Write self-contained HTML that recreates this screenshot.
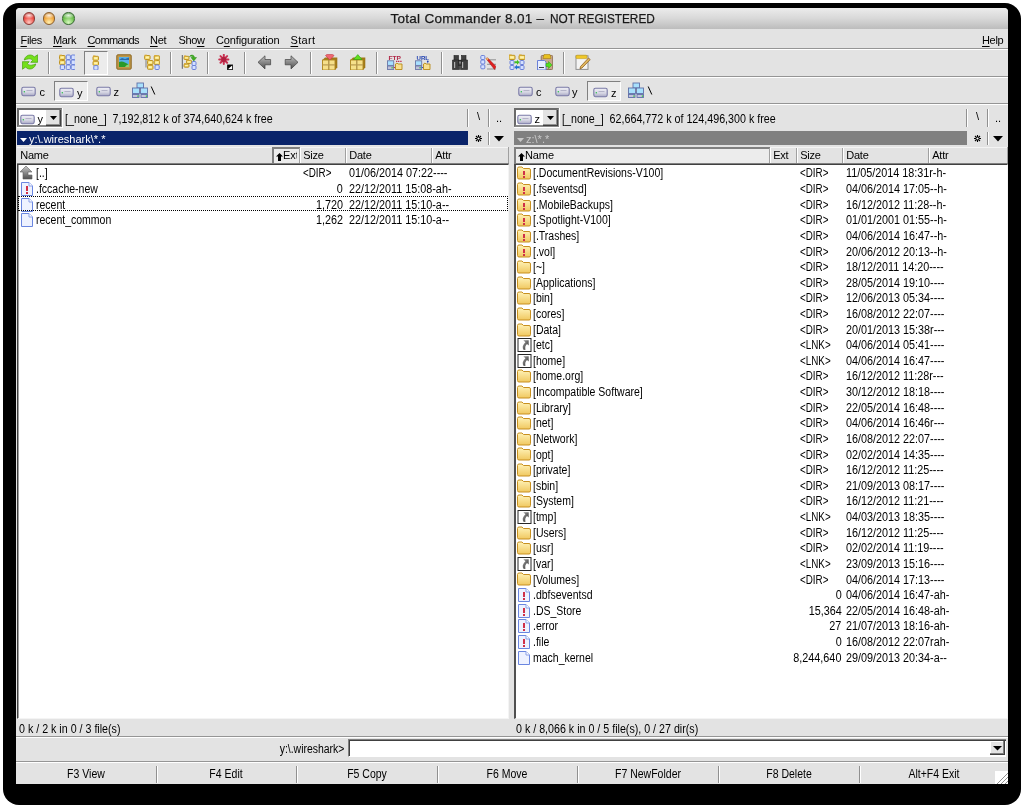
<!DOCTYPE html><html><head><meta charset="utf-8"><style>
*{box-sizing:border-box;margin:0;padding:0}
html,body{width:1024px;height:808px;overflow:hidden;background:#fff;font-family:"Liberation Sans",sans-serif;font-size:11px;color:#000}
.a{position:absolute}
.t{position:absolute;white-space:nowrap;line-height:1.2}
.tl{position:absolute;width:13px;height:13px;border-radius:50%}
u{text-decoration:underline;text-underline-offset:1.5px;text-decoration-thickness:1px}
</style></head><body><div style="position:absolute;left:0;top:0;width:1024px;height:808px;will-change:transform">
<svg width="0" height="0" style="position:absolute"><defs>
<linearGradient id="gFold" x1="0" y1="0" x2="0" y2="1"><stop offset="0" stop-color="#fff3b8"/><stop offset="1" stop-color="#f0c860"/></linearGradient>
<linearGradient id="gGrayArr" x1="0" y1="0" x2="0" y2="1"><stop offset="0" stop-color="#c8c8c8"/><stop offset="1" stop-color="#505050"/></linearGradient>
<symbol id="folder" viewBox="0 0 16 16"><path d="M1.5 3.5 Q1.5 2 3 2 H6 L7.5 3.5 H13 Q14.5 3.5 14.5 5 V12.5 Q14.5 14 13 14 H3 Q1.5 14 1.5 12.5 Z" fill="url(#gFold)" stroke="#c89020" stroke-width="1"/></symbol>
<symbol id="folderh" viewBox="0 0 16 16"><use href="#folder"/><rect x="7" y="6" width="2" height="4" fill="#d03048"/><rect x="7" y="11" width="2" height="2" fill="#d03048"/></symbol>
<symbol id="file" viewBox="0 0 16 16"><path d="M2.5 1.5 H10 L13.5 5 V14.5 H2.5 Z" fill="#eef2ff" stroke="#6a86e0" stroke-width="1"/><path d="M10 1.5 V5 H13.5" fill="#fff" stroke="#8aa0e8" stroke-width="1"/></symbol>
<symbol id="fileh" viewBox="0 0 16 16"><use href="#file"/><rect x="7" y="5" width="2" height="5" fill="#d03048"/><rect x="7" y="11" width="2" height="2" fill="#d03048"/></symbol>
<symbol id="link" viewBox="0 0 16 16"><linearGradient id="gLnk" x1="0" y1="0" x2="1" y2="1"><stop offset="0" stop-color="#a0a0a0"/><stop offset="1" stop-color="#303030"/></linearGradient><rect x="2" y="1.5" width="13" height="13" fill="#fff" stroke="#282828" stroke-width="1"/><path d="M7.3 3.2 H12.7 V8.6 L11 6.9 Q8.5 9 9.5 12.8 L7.7 13 Q5 9.5 9.4 5.3 Z" fill="url(#gLnk)"/></symbol>
<symbol id="updir" viewBox="0 0 16 16"><path d="M7 1 L1 7 H4 V14 H13 V10 H9 V7 H13 Z" fill="url(#gGrayArr)" stroke="#606060" stroke-width="0.6"/></symbol>
<symbol id="drive" viewBox="0 0 16 16"><linearGradient id="gDrv" x1="0" y1="0" x2="0" y2="1"><stop offset="0" stop-color="#f0f0f6"/><stop offset="0.6" stop-color="#d4d4e2"/><stop offset="1" stop-color="#a8a8c4"/></linearGradient><rect x="0.8" y="4.3" width="13.4" height="8.4" rx="1.6" fill="url(#gDrv)" stroke="#7a7aa6" stroke-width="1.1"/><rect x="5.5" y="7.2" width="6" height="0.8" fill="#a8a8c0"/><circle cx="3.3" cy="8.8" r="0.7" fill="#20c040"/></symbol>
<symbol id="net" viewBox="0 0 16 16"><g stroke="#6070a8" stroke-width="0.9"><rect x="5" y="1" width="6.5" height="5" fill="#a8e0fc"/><rect x="0.5" y="6" width="7" height="5.5" fill="#a8e0fc"/><rect x="8.5" y="6" width="7" height="5.5" fill="#a8e0fc"/><rect x="0.5" y="12.5" width="6.5" height="3" fill="#c4c4dc"/><rect x="9" y="12.5" width="6.5" height="3" fill="#c4c4dc"/></g><rect x="7" y="7.5" width="2" height="2" fill="#8080a0"/><rect x="5.3" y="13.5" width="1.2" height="1.2" fill="#20d020"/><rect x="13.8" y="13.5" width="1.2" height="1.2" fill="#20d020"/></symbol>
<symbol id="tb_refresh" viewBox="0 0 16 16"><path d="M2.2 6 C3 2.5 6 0.8 8.5 1 C10.5 1.2 11.5 2 12.3 3 L15.6 0.8 V8.3 H8.8 L10.6 6.3 C9.5 5 8 4.6 6.5 4.8 C5 5 3.5 5.6 2.2 6 Z" fill="#74e01a" stroke="#50a818" stroke-width="0.8"/><path d="M13.8 10 C13 13.5 10 15.2 7.5 15 C5.5 14.8 4.5 14 3.7 13 L0.4 15.2 V7.7 H7.2 L5.4 9.7 C6.5 11 8 11.4 9.5 11.2 C11 11 12.5 10.4 13.8 10 Z" fill="#74e01a" stroke="#50a818" stroke-width="0.8"/></symbol><symbol id="tb_brief" viewBox="0 0 16 16"><rect x="0.5" y="1.5" width="5.5" height="4.0" rx="0.8" fill="#f4dc70" stroke="#b88a18" stroke-width="0.9"/><rect x="0.5" y="0.7" width="2.475" height="1.5" fill="#d8a830"/><rect x="1.7" y="2.5" width="3.1" height="1.7999999999999998" fill="#fff4b0"/><rect x="0.5" y="6.5" width="5.5" height="4.0" rx="0.8" fill="#f4dc70" stroke="#b88a18" stroke-width="0.9"/><rect x="0.5" y="5.7" width="2.475" height="1.5" fill="#d8a830"/><rect x="1.7" y="7.5" width="3.1" height="1.7999999999999998" fill="#fff4b0"/><rect x="1.3" y="11" width="4.2" height="4.5" rx="1" fill="#d4e0ff" stroke="#6a80d8" stroke-width="1"/><rect x="7.2" y="1" width="4.2" height="4.5" rx="1" fill="#d4e0ff" stroke="#6a80d8" stroke-width="1"/><rect x="7.2" y="6" width="4.2" height="4.5" rx="1" fill="#d4e0ff" stroke="#6a80d8" stroke-width="1"/><rect x="7.2" y="11" width="4.2" height="4.5" rx="1" fill="#d4e0ff" stroke="#6a80d8" stroke-width="1"/><rect x="12.2" y="1" width="4.2" height="4.5" rx="1" fill="#d4e0ff" stroke="#6a80d8" stroke-width="1"/><rect x="12.2" y="6" width="4.2" height="4.5" rx="1" fill="#d4e0ff" stroke="#6a80d8" stroke-width="1"/><rect x="12.2" y="11" width="4.2" height="4.5" rx="1" fill="#d4e0ff" stroke="#6a80d8" stroke-width="1"/></symbol><symbol id="tb_detail" viewBox="0 0 16 16"><rect x="5" y="2.3" width="5.5" height="4.0" rx="0.8" fill="#f4dc70" stroke="#b88a18" stroke-width="0.9"/><rect x="5" y="1.5" width="2.475" height="1.5" fill="#d8a830"/><rect x="6.2" y="3.3" width="3.1" height="1.7999999999999998" fill="#fff4b0"/><rect x="5" y="7.3" width="5.5" height="4.0" rx="0.8" fill="#f4dc70" stroke="#b88a18" stroke-width="0.9"/><rect x="5" y="6.5" width="2.475" height="1.5" fill="#d8a830"/><rect x="6.2" y="8.3" width="3.1" height="1.7999999999999998" fill="#fff4b0"/><rect x="5.8" y="11.6" width="4.2" height="4.5" rx="1" fill="#d4e0ff" stroke="#6a80d8" stroke-width="1"/></symbol><symbol id="tb_thumb" viewBox="0 0 16 16"><rect x="0.8" y="0.8" width="14.4" height="14.4" rx="1" fill="#c09848" stroke="#8a6420" stroke-width="1"/><rect x="3" y="3" width="10" height="10" fill="#5ab0e8"/><path d="M3 6 L6 4 L9 5 L13 3.5 V6 Z" fill="#2a6aa8"/><path d="M3 8 C6 6.5 9 8 13 11 V13 H3 Z" fill="#2a9a2a"/><path d="M9 13 C10 11 12 10.5 13 10 V13 Z" fill="#90d070"/></symbol><symbol id="tb_tree" viewBox="0 0 16 16"><rect x="0.6" y="1.5" width="5.5" height="4.0" rx="0.8" fill="#f4dc70" stroke="#b88a18" stroke-width="0.9"/><rect x="0.6" y="0.7" width="2.475" height="1.5" fill="#d8a830"/><rect x="1.7999999999999998" y="2.5" width="3.1" height="1.7999999999999998" fill="#fff4b0"/><rect x="1.5" y="6" width="1" height="7.5" fill="#808080"/><rect x="3.5" y="6.5" width="5.5" height="4.0" rx="0.8" fill="#f4dc70" stroke="#b88a18" stroke-width="0.9"/><rect x="3.5" y="5.7" width="2.475" height="1.5" fill="#d8a830"/><rect x="4.7" y="7.5" width="3.1" height="1.7999999999999998" fill="#fff4b0"/><rect x="3.5" y="11.3" width="5.5" height="4.0" rx="0.8" fill="#f4dc70" stroke="#b88a18" stroke-width="0.9"/><rect x="3.5" y="10.5" width="2.475" height="1.5" fill="#d8a830"/><rect x="4.7" y="12.3" width="3.1" height="1.7999999999999998" fill="#fff4b0"/><rect x="10.2" y="1.8" width="5.5" height="4.0" rx="0.8" fill="#f4dc70" stroke="#b88a18" stroke-width="0.9"/><rect x="10.2" y="1" width="2.475" height="1.5" fill="#d8a830"/><rect x="11.399999999999999" y="2.8" width="3.1" height="1.7999999999999998" fill="#fff4b0"/><rect x="10.2" y="6.5" width="5.5" height="4.0" rx="0.8" fill="#f4dc70" stroke="#b88a18" stroke-width="0.9"/><rect x="10.2" y="5.7" width="2.475" height="1.5" fill="#d8a830"/><rect x="11.399999999999999" y="7.5" width="3.1" height="1.7999999999999998" fill="#fff4b0"/><rect x="11" y="11" width="4.2" height="4.5" rx="1" fill="#d4e0ff" stroke="#6a80d8" stroke-width="1"/></symbol><symbol id="tb_sync" viewBox="0 0 16 16"><rect x="0.8" y="1" width="1" height="13.8" fill="#606060"/><rect x="3" y="2.3" width="5" height="3.2" rx="0.8" fill="#f4dc70" stroke="#b88a18" stroke-width="0.9"/><rect x="3" y="1.5" width="2.25" height="1.5" fill="#d8a830"/><rect x="4.2" y="3.3" width="2.6" height="1" fill="#fff4b0"/><rect x="5.5" y="6.3" width="5" height="3.2" rx="0.8" fill="#f4dc70" stroke="#b88a18" stroke-width="0.9"/><rect x="5.5" y="5.5" width="2.25" height="1.5" fill="#d8a830"/><rect x="6.7" y="7.3" width="2.6" height="1" fill="#fff4b0"/><rect x="3" y="10.0" width="5" height="3.2" rx="0.8" fill="#f4dc70" stroke="#b88a18" stroke-width="0.9"/><rect x="3" y="9.2" width="2.25" height="1.5" fill="#d8a830"/><rect x="4.2" y="11.0" width="2.6" height="1" fill="#fff4b0"/><path d="M8.5 2.5 C10 0.5 13 0.5 13.5 3.5 L15.5 3.5 L12.8 7 L10 3.5 L12 3.5 C11.5 2 10 2 8.5 2.5Z" fill="#40b020" stroke="#2a8a18" stroke-width="0.5"/><rect x="11" y="7.5" width="4" height="4" rx="1" fill="#d4e0ff" stroke="#6a80d8" stroke-width="1"/><rect x="11" y="11.5" width="4" height="4" rx="1" fill="#d4e0ff" stroke="#6a80d8" stroke-width="1"/></symbol><symbol id="tb_ast" viewBox="0 0 16 16"><g stroke="#c83050" stroke-width="2" stroke-linecap="round"><path d="M6.8 0.8V10M2.2 5.4H11.4M3.5 2.1L10.1 8.7M10.1 2.1L3.5 8.7"/></g><circle cx="6.8" cy="5.4" r="2.5" fill="#b02040"/><rect x="10.6" y="11" width="5" height="4.6" fill="#fff" stroke="#202020" stroke-width="1"/><path d="M10.6 11H15.6L10.6 15.6Z" fill="#000"/></symbol><symbol id="tb_back" viewBox="0 0 16 16"><linearGradient id="gArr" x1="0" y1="0" x2="0" y2="1"><stop offset="0" stop-color="#c0c0c0"/><stop offset="1" stop-color="#505050"/></linearGradient><path d="M2 8.3 L9 1.8 V5.5 H14.6 V10.8 H9 V14.9 Z" fill="url(#gArr)" stroke="#404040" stroke-width="0.7"/></symbol><symbol id="tb_fwd" viewBox="0 0 16 16"><path d="M15 8.3 L8 1.8 V5.5 H2.2 V10.8 H8 V14.9 Z" fill="url(#gArr)" stroke="#404040" stroke-width="0.7"/></symbol><symbol id="tb_pack" viewBox="0 0 16 16"><path d="M0.5 6 L3 3.6 H15.3 V13.5 L13 16 H0.5 Z" fill="#a07818"/><rect x="0.5" y="6" width="12.5" height="10" fill="#f6e08a" stroke="#b08820" stroke-width="0.9"/><rect x="6.2" y="6" width="1.2" height="10" fill="#a88a40"/><rect x="0.5" y="10.3" width="12.5" height="1.2" fill="#b89a50"/><path d="M3.5 1.5 L5 0.4 H10.5 L12 1.5 L7.8 6 Z" fill="#f06870" stroke="#c03040" stroke-width="0.6"/></symbol><symbol id="tb_unpack" viewBox="0 0 16 16"><path d="M0.5 6 L3 3.6 H15.3 V13.5 L13 16 H0.5 Z" fill="#a07818"/><rect x="0.5" y="6" width="12.5" height="10" fill="#f6e08a" stroke="#b08820" stroke-width="0.9"/><rect x="6.2" y="6" width="1.2" height="10" fill="#a88a40"/><rect x="0.5" y="10.3" width="12.5" height="1.2" fill="#b89a50"/><path d="M3.5 5.5 L7.8 0.6 L12 5.5 Z" fill="#60e020" stroke="#30a010" stroke-width="0.6"/></symbol><symbol id="tb_ftp" viewBox="0 0 16 16"><text x="1.5" y="5.6" font-family="Liberation Sans" font-weight="bold" font-size="6.2" fill="#b02848" textLength="12.5" lengthAdjust="spacingAndGlyphs">FTP</text><rect x="0.5" y="6.8" width="6.2" height="4.6" fill="#a8e0ff" stroke="#6a78a8" stroke-width="0.9"/><rect x="0.5" y="12" width="6.2" height="3.5" fill="#c0c0d8" stroke="#6a78a8" stroke-width="0.9"/><rect x="4.5" y="13.2" width="1.2" height="1.2" fill="#20c020"/><rect x="6.7" y="13" width="2" height="1" fill="#c03050"/><path d="M8.5 10 L10 9 L11 10 H15 V15.5 H8.5 Z" fill="#f8e090" stroke="#b88a18" stroke-width="0.9"/><path d="M9 7.4H15" stroke="#c03050" stroke-width="1.2" stroke-dasharray="1.2 0.6"/></symbol><symbol id="tb_url" viewBox="0 0 16 16"><text x="1.5" y="5.6" font-family="Liberation Sans" font-weight="bold" font-size="6.2" fill="#2040b0" textLength="12.5" lengthAdjust="spacingAndGlyphs">URL</text><rect x="0.5" y="6.8" width="6.2" height="4.6" fill="#a8e0ff" stroke="#6a78a8" stroke-width="0.9"/><rect x="0.5" y="12" width="6.2" height="3.5" fill="#c0c0d8" stroke="#6a78a8" stroke-width="0.9"/><rect x="4.5" y="13.2" width="1.2" height="1.2" fill="#20c020"/><rect x="6.7" y="13" width="2" height="1" fill="#3050c0"/><path d="M8.5 10 L10 9 L11 10 H15 V15.5 H8.5 Z" fill="#f8e090" stroke="#b88a18" stroke-width="0.9"/><circle cx="12.8" cy="7.3" r="0.9" fill="#2040b0"/><rect x="12.5" y="7.5" width="0.6" height="1.8" fill="#2040b0"/></symbol><symbol id="tb_find" viewBox="0 0 16 16"><g fill="#404040" stroke="#202020" stroke-width="0.6"><rect x="2" y="1.5" width="4.5" height="5"/><rect x="9.5" y="1.5" width="4.5" height="5"/><path d="M0.5 6 H7.5 V15.5 H0.5 Z"/><path d="M8.5 6 H15.5 V15.5 H8.5 Z"/><rect x="6.5" y="6.5" width="3" height="5"/></g><rect x="2" y="8" width="1.2" height="6" fill="#b0b0b0"/><rect x="10" y="8" width="1.2" height="6" fill="#b0b0b0"/><rect x="7.5" y="7.5" width="1" height="2" fill="#c0c0c0"/></symbol><symbol id="tb_ren" viewBox="0 0 16 16"><rect x="0.8" y="1.5" width="4" height="4" rx="1" fill="#d4e0ff" stroke="#6a80d8" stroke-width="1"/><rect x="0.8" y="6" width="4" height="4" rx="1" fill="#d4e0ff" stroke="#6a80d8" stroke-width="1"/><rect x="0.8" y="10.8" width="4" height="4" rx="1" fill="#d4e0ff" stroke="#6a80d8" stroke-width="1"/><rect x="7" y="5.3" width="9" height="1" fill="#909090"/><rect x="7" y="9.8" width="9" height="1" fill="#909090"/><rect x="7" y="14.5" width="9" height="1" fill="#909090"/><path d="M6 4.5 L7.5 3.8 L16 12.5 L14.5 15.5 Z" fill="#e02020" stroke="#a01010" stroke-width="0.5"/><path d="M6 4.5 L7.5 3.8 L8.6 5 L7 6.2Z" fill="#f0c060"/></symbol><symbol id="tb_cmp" viewBox="0 0 16 16"><rect x="0" y="1.3" width="6" height="4.2" rx="0.8" fill="#f4dc70" stroke="#b88a18" stroke-width="0.9"/><rect x="0" y="0.5" width="2.7" height="1.5" fill="#d8a830"/><rect x="1.2" y="2.3" width="3.6" height="2" fill="#fff4b0"/><rect x="10" y="1.3" width="6" height="4.2" rx="0.8" fill="#f4dc70" stroke="#b88a18" stroke-width="0.9"/><rect x="10" y="0.5" width="2.7" height="1.5" fill="#d8a830"/><rect x="11.2" y="2.3" width="3.6" height="2" fill="#fff4b0"/><rect x="1" y="6.5" width="4" height="4" rx="1" fill="#d4e0ff" stroke="#6a80d8" stroke-width="1"/><rect x="1" y="11.5" width="4" height="4" rx="1" fill="#d4e0ff" stroke="#6a80d8" stroke-width="1"/><rect x="11" y="6.5" width="4" height="4" rx="1" fill="#d4e0ff" stroke="#6a80d8" stroke-width="1"/><rect x="11" y="11.5" width="4" height="4" rx="1" fill="#d4e0ff" stroke="#6a80d8" stroke-width="1"/><path d="M5.5 7.3H8V5.8L10.5 8.3L8 10.8V9.3H5.5Z" fill="#40c020"/><path d="M10.5 12.3H8V10.8L5.5 13.3L8 15.8V14.3H10.5Z" fill="#2070d0"/></symbol><symbol id="tb_copy" viewBox="0 0 16 16"><rect x="4.2" y="1.5" width="11.5" height="14" rx="1" fill="#c8a890" stroke="#8a6a50" stroke-width="0.9"/><path d="M6 4.5 L7 0.5 H13 L14 4.5 Z" fill="#e8c020" stroke="#a88010" stroke-width="0.6"/><path d="M0.5 6.5 H7.5 L9 8 V16 H0.5 Z" fill="#e8eeff" stroke="#6a80d8" stroke-width="1"/><rect x="2" y="13" width="5" height="1" fill="#404040" stroke-dasharray="1 1"/><path d="M9 9.5H11.5V7.5L15 11L11.5 14.5V12.5H9Z" fill="#50e020" stroke="#30a010" stroke-width="0.5"/></symbol><symbol id="tb_note" viewBox="0 0 16 16"><rect x="1" y="1.8" width="12" height="13.6" fill="#f4f4f4" stroke="#909090" stroke-width="1"/><rect x="1" y="1.2" width="11" height="3.4" rx="1" fill="#f0c828" stroke="#c09818" stroke-width="0.6"/><path d="M5.5 12.5 L13.5 4 L15.2 5.6 L7 14 L5 14.8 Z" fill="#e0b860" stroke="#906020" stroke-width="0.8"/></symbol></defs></svg>
<div class="a" style="left:3px;top:3px;width:1018px;height:802px;background:#000;border-radius:16px"></div><div class="a" style="left:16px;top:8px;width:992px;height:776px;background:#e3e3e3;border-radius:4px 4px 0 0"></div><div class="a" style="left:16px;top:8px;width:992px;height:21px;background:linear-gradient(#ececec,#d8d8d8 50%,#bcbcbc);border-radius:4px 4px 0 0"></div><div class="tl" style="left:22.8px;top:12.4px;width:12.4px;height:12.4px;border:1px solid #8a3a36;background:radial-gradient(ellipse 60% 30% at 50% 22%,rgba(255,255,255,.85),rgba(255,255,255,0) 100%),radial-gradient(circle at 50% 85%,#ffc8c0 0,#ec4a42 55%,#a83028 100%)"></div><div class="tl" style="left:42.8px;top:12.4px;width:12.4px;height:12.4px;border:1px solid #8a6030;background:radial-gradient(ellipse 60% 30% at 50% 22%,rgba(255,255,255,.85),rgba(255,255,255,0) 100%),radial-gradient(circle at 50% 85%,#fff0b0 0,#f0a43a 55%,#b07020 100%)"></div><div class="tl" style="left:62.3px;top:12.4px;width:12.4px;height:12.4px;border:1px solid #3a6a34;background:radial-gradient(ellipse 60% 30% at 50% 22%,rgba(255,255,255,.85),rgba(255,255,255,0) 100%),radial-gradient(circle at 50% 85%,#d8f8c0 0,#6cc04c 55%,#3a8a30 100%)"></div><div class="t" style="left:390.5px;top:10.6px;font-size:13.5px;color:#181818;letter-spacing:0.27px;-webkit-text-stroke:0.25px #181818">Total Commander 8.01 –</div><div class="t" style="left:549.5px;top:10.6px;font-size:13.5px;color:#181818;transform:scaleX(0.875);transform-origin:0 0;-webkit-text-stroke:0.25px #181818">NOT REGISTERED</div><div class="t" style="left:20.5px;top:34px;font-size:11px;letter-spacing:-0.35px"><u>F</u>iles</div><div class="t" style="left:53px;top:34px;font-size:11px;letter-spacing:-0.35px"><u>M</u>ark</div><div class="t" style="left:87.5px;top:34px;font-size:11px;letter-spacing:-0.6px"><u>C</u>ommands</div><div class="t" style="left:150px;top:34px;font-size:11px;letter-spacing:-0.3px"><u>N</u>et</div><div class="t" style="left:178.5px;top:34px;font-size:11px;letter-spacing:-0.4px">Sho<u>w</u></div><div class="t" style="left:216px;top:34px;font-size:11px;letter-spacing:-0.15px">C<u>o</u>nfiguration</div><div class="t" style="left:290.5px;top:34px;font-size:11px;letter-spacing:0.3px"><u>S</u>tart</div><div class="t" style="left:982px;top:34px;font-size:11px;letter-spacing:-0.35px"><u>H</u>elp</div><div class="a" style="left:16px;top:48px;width:992px;height:1px;background:#959595"></div><div class="a" style="left:16px;top:49px;width:992px;height:1px;background:#fff"></div><div class="a" style="left:16px;top:76px;width:992px;height:1px;background:#959595"></div><div class="a" style="left:16px;top:77px;width:992px;height:1px;background:#fff"></div><div class="a" style="left:48px;top:52px;width:1px;height:22px;background:#909090"></div><div class="a" style="left:49px;top:52px;width:1px;height:22px;background:#fff"></div><div class="a" style="left:170px;top:52px;width:1px;height:22px;background:#909090"></div><div class="a" style="left:171px;top:52px;width:1px;height:22px;background:#fff"></div><div class="a" style="left:207px;top:52px;width:1px;height:22px;background:#909090"></div><div class="a" style="left:208px;top:52px;width:1px;height:22px;background:#fff"></div><div class="a" style="left:244px;top:52px;width:1px;height:22px;background:#909090"></div><div class="a" style="left:245px;top:52px;width:1px;height:22px;background:#fff"></div><div class="a" style="left:310px;top:52px;width:1px;height:22px;background:#909090"></div><div class="a" style="left:311px;top:52px;width:1px;height:22px;background:#fff"></div><div class="a" style="left:376px;top:52px;width:1px;height:22px;background:#909090"></div><div class="a" style="left:377px;top:52px;width:1px;height:22px;background:#fff"></div><div class="a" style="left:441px;top:52px;width:1px;height:22px;background:#909090"></div><div class="a" style="left:442px;top:52px;width:1px;height:22px;background:#fff"></div><div class="a" style="left:563px;top:52px;width:1px;height:22px;background:#909090"></div><div class="a" style="left:564px;top:52px;width:1px;height:22px;background:#fff"></div><div class="a" style="left:84px;top:51px;width:24px;height:24px;border-top:1px solid #808080;border-left:1px solid #808080;border-right:1px solid #fff;border-bottom:1px solid #fff;background:#ececec"></div><svg class="a" style="left:22px;top:54px" width="16" height="16" viewBox="0 0 16 16"><use href="#tb_refresh"/></svg><svg class="a" style="left:59px;top:54px" width="16" height="16" viewBox="0 0 16 16"><use href="#tb_brief"/></svg><svg class="a" style="left:88px;top:54px" width="16" height="16" viewBox="0 0 16 16"><use href="#tb_detail"/></svg><svg class="a" style="left:116px;top:54px" width="16" height="16" viewBox="0 0 16 16"><use href="#tb_thumb"/></svg><svg class="a" style="left:144px;top:54px" width="16" height="16" viewBox="0 0 16 16"><use href="#tb_tree"/></svg><svg class="a" style="left:181px;top:54px" width="16" height="16" viewBox="0 0 16 16"><use href="#tb_sync"/></svg><svg class="a" style="left:217px;top:54px" width="16" height="16" viewBox="0 0 16 16"><use href="#tb_ast"/></svg><svg class="a" style="left:256px;top:54px" width="16" height="16" viewBox="0 0 16 16"><use href="#tb_back"/></svg><svg class="a" style="left:283px;top:54px" width="16" height="16" viewBox="0 0 16 16"><use href="#tb_fwd"/></svg><svg class="a" style="left:322px;top:54px" width="16" height="16" viewBox="0 0 16 16"><use href="#tb_pack"/></svg><svg class="a" style="left:350px;top:54px" width="16" height="16" viewBox="0 0 16 16"><use href="#tb_unpack"/></svg><svg class="a" style="left:387px;top:54px" width="16" height="16" viewBox="0 0 16 16"><use href="#tb_ftp"/></svg><svg class="a" style="left:415px;top:54px" width="16" height="16" viewBox="0 0 16 16"><use href="#tb_url"/></svg><svg class="a" style="left:452px;top:54px" width="16" height="16" viewBox="0 0 16 16"><use href="#tb_find"/></svg><svg class="a" style="left:480px;top:54px" width="16" height="16" viewBox="0 0 16 16"><use href="#tb_ren"/></svg><svg class="a" style="left:509px;top:54px" width="16" height="16" viewBox="0 0 16 16"><use href="#tb_cmp"/></svg><svg class="a" style="left:537px;top:54px" width="16" height="16" viewBox="0 0 16 16"><use href="#tb_copy"/></svg><svg class="a" style="left:575px;top:54px" width="16" height="16" viewBox="0 0 16 16"><use href="#tb_note"/></svg><div class="a" style="left:16px;top:103px;width:992px;height:1px;background:#959595"></div><div class="a" style="left:16px;top:104px;width:992px;height:1px;background:#fff"></div><div class="a" style="left:54px;top:81px;width:34px;height:20px;border-top:1px solid #808080;border-left:1px solid #808080;border-right:1px solid #fff;border-bottom:1px solid #fff;background:#ececec"></div><svg class="a" style="left:21px;top:83px" width="16" height="16" viewBox="0 0 16 16"><use href="#drive"/></svg><div class="t" style="left:39.5px;top:85.5px;font-size:11px;">c</div><svg class="a" style="left:59px;top:84px" width="16" height="16" viewBox="0 0 16 16"><use href="#drive"/></svg><div class="t" style="left:77px;top:86.5px;font-size:11px;">y</div><svg class="a" style="left:96px;top:83px" width="16" height="16" viewBox="0 0 16 16"><use href="#drive"/></svg><div class="t" style="left:113.5px;top:85.5px;font-size:11px;">z</div><svg class="a" style="left:132px;top:82px" width="16" height="16" viewBox="0 0 16 16"><use href="#net"/></svg><svg class="a" style="left:150px;top:85px" width="6" height="11"><path d="M1.2 1.5L4.8 9.5" stroke="#000" stroke-width="1"/></svg><div class="a" style="left:587px;top:81px;width:34px;height:20px;border-top:1px solid #808080;border-left:1px solid #808080;border-right:1px solid #fff;border-bottom:1px solid #fff;background:#ececec"></div><svg class="a" style="left:517.5px;top:83px" width="16" height="16" viewBox="0 0 16 16"><use href="#drive"/></svg><div class="t" style="left:536px;top:85.5px;font-size:11px;">c</div><svg class="a" style="left:554.5px;top:83px" width="16" height="16" viewBox="0 0 16 16"><use href="#drive"/></svg><div class="t" style="left:572px;top:85.5px;font-size:11px;">y</div><svg class="a" style="left:592.5px;top:84px" width="16" height="16" viewBox="0 0 16 16"><use href="#drive"/></svg><div class="t" style="left:611px;top:86.5px;font-size:11px;">z</div><svg class="a" style="left:628px;top:82px" width="16" height="16" viewBox="0 0 16 16"><use href="#net"/></svg><svg class="a" style="left:646.5px;top:85px" width="6" height="11"><path d="M1.2 1.5L4.8 9.5" stroke="#000" stroke-width="1"/></svg><div class="a" style="left:17px;top:108px;width:46px;height:20px;background:#fff;border-right:1px solid #fff;border-bottom:1px solid #fff"></div><div class="a" style="left:17px;top:108px;width:45px;height:19px;background:#fff;border:2px solid #6a6a6a;border-right-color:#8a8a8a;border-bottom-color:#8a8a8a"></div><svg class="a" style="left:20px;top:111px" width="16" height="16" viewBox="0 0 16 16"><use href="#drive"/></svg><div class="t" style="left:37.5px;top:113px;font-size:11px;">y</div><div class="a" style="left:46px;top:110px;width:15px;height:16px;background:#e3e3e3;border-right:1px solid #404040;border-bottom:1px solid #404040;box-shadow:inset -1px -1px 0 #909090"></div><svg class="a" style="left:50px;top:116px" width="7" height="4"><path d="M0 0H7L3.5 4Z" fill="#000"/></svg><div class="t" style="left:65px;top:112.3px;font-size:12px;transform:scaleX(0.892);transform-origin:left 0;">[_none_]&nbsp; 7,192,812 k of 374,640,624 k free</div><div class="a" style="left:467px;top:109px;width:1px;height:18px;background:#909090"></div><div class="a" style="left:468px;top:109px;width:1px;height:18px;background:#fff"></div><div class="a" style="left:488px;top:109px;width:1px;height:18px;background:#909090"></div><div class="a" style="left:489px;top:109px;width:1px;height:18px;background:#fff"></div><div class="t" style="left:477px;top:110px;font-size:11px;">\</div><div class="t" style="left:496px;top:112px;font-size:11px;">..</div><div class="a" style="left:17px;top:131px;width:451px;height:14px;background:#0a246a"></div><svg class="a" style="left:20px;top:138px" width="7" height="4"><path d="M0 0H7L3.5 4Z" fill="#fff"/></svg><div class="t" style="left:29px;top:132.5px;font-size:11px;color:#fff;letter-spacing:0px">y:\.wireshark\*.*</div><div class="a" style="left:488px;top:132px;width:1px;height:13px;background:#909090"></div><div class="a" style="left:489px;top:132px;width:1px;height:13px;background:#fff"></div><svg class="a" style="left:474.7px;top:134.6px" width="7" height="7" viewBox="0 0 7 7"><g stroke="#000" stroke-width="1.1"><path d="M3.5 0V7M0 3.5H7M1 1L6 6M6 1L1 6"/></g><circle cx="3.5" cy="3.5" r="1.1" fill="#fff"/></svg><svg class="a" style="left:494px;top:136px" width="10" height="6"><path d="M0 0H10L5 5.5Z" fill="#000"/></svg><div class="a" style="left:17px;top:147px;width:492px;height:17px;background:#e3e3e3;border-top:1px solid #f4f4f4"></div><div class="t" style="left:20.2px;top:149.2px;font-size:11px;letter-spacing:-0.2px">Name</div><div class="a" style="left:272px;top:147px;width:28px;height:17px;border-top:2px solid #808080;border-left:2px solid #808080;background:#ececec"></div><svg class="a" style="left:275.5px;top:152.5px" width="7" height="8"><path d="M3.5 0L7 3.5H5V8H2V3.5H0Z" fill="#000"/></svg><div class="t" style="left:283px;top:149.2px;width:13.5px;overflow:hidden;letter-spacing:-0.1px">Ext</div><div class="a" style="left:299px;top:148px;width:1px;height:15px;background:#a0a0a0"></div><div class="a" style="left:300px;top:148px;width:1px;height:15px;background:#fff"></div><div class="t" style="left:303.2px;top:149.2px;font-size:11px;letter-spacing:-0.2px">Size</div><div class="a" style="left:345px;top:148px;width:1px;height:15px;background:#a0a0a0"></div><div class="a" style="left:346px;top:148px;width:1px;height:15px;background:#fff"></div><div class="t" style="left:349.2px;top:149.2px;font-size:11px;letter-spacing:-0.2px">Date</div><div class="a" style="left:431px;top:148px;width:1px;height:15px;background:#a0a0a0"></div><div class="a" style="left:432px;top:148px;width:1px;height:15px;background:#fff"></div><div class="t" style="left:435.2px;top:149.2px;font-size:11px;letter-spacing:-0.2px">Attr</div><div class="a" style="left:508px;top:147px;width:1px;height:17px;background:#a0a0a0"></div><div class="a" style="left:17px;top:164px;width:492px;height:555px;background:#fff;border-top:1px solid #404040;border-right:1px solid #f4f4f4;border-bottom:1px solid #f4f4f4;border-left:1px solid #404040;box-shadow:inset 1px 0 0 #a0a0a0"></div><div class="a" style="left:17px;top:163px;width:492px;height:1px;background:#808080"></div><svg class="a" style="left:19px;top:165px" width="16" height="16" viewBox="0 0 16 16"><use href="#updir"/></svg><div class="t" style="left:36.2px;top:166.4px;font-size:12px;transform:scaleX(0.875);transform-origin:left 0;letter-spacing:0px">[..]</div><div class="t" style="left:303px;top:166.4px;font-size:12px;transform:scaleX(0.82);transform-origin:left 0;letter-spacing:0px">&lt;DIR&gt;</div><div class="t" style="left:348.5px;top:166.4px;font-size:12px;transform:scaleX(0.9);transform-origin:left 0;letter-spacing:0px">01/06/2014 07:22----</div><svg class="a" style="left:19px;top:181px" width="16" height="16" viewBox="0 0 16 16"><use href="#fileh"/></svg><div class="t" style="left:36.2px;top:182.02px;font-size:12px;transform:scaleX(0.875);transform-origin:left 0;letter-spacing:0px">.fccache-new</div><div class="t" style="right:681px;top:182.02px;font-size:12px;transform:scaleX(0.9);transform-origin:right 0;letter-spacing:0px">0</div><div class="t" style="left:348.5px;top:182.02px;font-size:12px;transform:scaleX(0.9);transform-origin:left 0;letter-spacing:0px">22/12/2011 15:08-ah-</div><svg class="a" style="left:19px;top:197px" width="16" height="16" viewBox="0 0 16 16"><use href="#file"/></svg><div class="t" style="left:36.2px;top:197.64000000000001px;font-size:12px;transform:scaleX(0.875);transform-origin:left 0;letter-spacing:0px">recent</div><div class="t" style="right:681px;top:197.64000000000001px;font-size:12px;transform:scaleX(0.9);transform-origin:right 0;letter-spacing:0px">1,720</div><div class="t" style="left:348.5px;top:197.64000000000001px;font-size:12px;transform:scaleX(0.9);transform-origin:left 0;letter-spacing:0px">22/12/2011 15:10-a--</div><svg class="a" style="left:19px;top:212px" width="16" height="16" viewBox="0 0 16 16"><use href="#file"/></svg><div class="t" style="left:36.2px;top:213.26000000000002px;font-size:12px;transform:scaleX(0.875);transform-origin:left 0;letter-spacing:0px">recent_common</div><div class="t" style="right:681px;top:213.26000000000002px;font-size:12px;transform:scaleX(0.9);transform-origin:right 0;letter-spacing:0px">1,262</div><div class="t" style="left:348.5px;top:213.26000000000002px;font-size:12px;transform:scaleX(0.9);transform-origin:left 0;letter-spacing:0px">22/12/2011 15:10-a--</div><div class="a" style="left:18px;top:196.34000000000003px;width:490px;height:15px;border:1px dotted #000"></div><div class="t" style="left:18.5px;top:722.4px;font-size:12px;transform:scaleX(0.89);transform-origin:left 0;">0 k / 2 k in 0 / 3 file(s)</div><div class="a" style="left:514px;top:108px;width:46px;height:20px;background:#fff;border-right:1px solid #fff;border-bottom:1px solid #fff"></div><div class="a" style="left:514px;top:108px;width:45px;height:19px;background:#fff;border:2px solid #6a6a6a;border-right-color:#8a8a8a;border-bottom-color:#8a8a8a"></div><svg class="a" style="left:517px;top:111px" width="16" height="16" viewBox="0 0 16 16"><use href="#drive"/></svg><div class="t" style="left:534.5px;top:113px;font-size:11px;">z</div><div class="a" style="left:543px;top:110px;width:15px;height:16px;background:#e3e3e3;border-right:1px solid #404040;border-bottom:1px solid #404040;box-shadow:inset -1px -1px 0 #909090"></div><svg class="a" style="left:547px;top:116px" width="7" height="4"><path d="M0 0H7L3.5 4Z" fill="#000"/></svg><div class="t" style="left:562px;top:112.3px;font-size:12px;transform:scaleX(0.892);transform-origin:left 0;">[_none_]&nbsp; 62,664,772 k of 124,496,300 k free</div><div class="a" style="left:966px;top:109px;width:1px;height:18px;background:#909090"></div><div class="a" style="left:967px;top:109px;width:1px;height:18px;background:#fff"></div><div class="a" style="left:987px;top:109px;width:1px;height:18px;background:#909090"></div><div class="a" style="left:988px;top:109px;width:1px;height:18px;background:#fff"></div><div class="t" style="left:976px;top:110px;font-size:11px;">\</div><div class="t" style="left:995px;top:112px;font-size:11px;">..</div><div class="a" style="left:514px;top:131px;width:453px;height:14px;background:#808080"></div><svg class="a" style="left:517px;top:138px" width="7" height="4"><path d="M0 0H7L3.5 4Z" fill="#c8c8c8"/></svg><div class="t" style="left:526px;top:132.5px;font-size:11px;color:#c8c8c8;letter-spacing:0px">z:\*.*</div><div class="a" style="left:987px;top:132px;width:1px;height:13px;background:#909090"></div><div class="a" style="left:988px;top:132px;width:1px;height:13px;background:#fff"></div><svg class="a" style="left:973.7px;top:134.6px" width="7" height="7" viewBox="0 0 7 7"><g stroke="#000" stroke-width="1.1"><path d="M3.5 0V7M0 3.5H7M1 1L6 6M6 1L1 6"/></g><circle cx="3.5" cy="3.5" r="1.1" fill="#fff"/></svg><svg class="a" style="left:993px;top:136px" width="10" height="6"><path d="M0 0H10L5 5.5Z" fill="#000"/></svg><div class="a" style="left:514px;top:147px;width:494px;height:17px;background:#e3e3e3;border-top:1px solid #f4f4f4"></div><div class="a" style="left:514px;top:147px;width:256px;height:17px;border-top:2px solid #808080;border-left:2px solid #808080;background:#ececec"></div><svg class="a" style="left:517.5px;top:152.5px" width="7" height="8"><path d="M3.5 0L7 3.5H5V8H2V3.5H0Z" fill="#000"/></svg><div class="t" style="left:525px;top:149.2px;width:241.5px;overflow:hidden;letter-spacing:-0.1px">Name</div><div class="a" style="left:769px;top:148px;width:1px;height:15px;background:#a0a0a0"></div><div class="a" style="left:770px;top:148px;width:1px;height:15px;background:#fff"></div><div class="t" style="left:773.2px;top:149.2px;font-size:11px;letter-spacing:-0.2px">Ext</div><div class="a" style="left:796px;top:148px;width:1px;height:15px;background:#a0a0a0"></div><div class="a" style="left:797px;top:148px;width:1px;height:15px;background:#fff"></div><div class="t" style="left:800.2px;top:149.2px;font-size:11px;letter-spacing:-0.2px">Size</div><div class="a" style="left:842px;top:148px;width:1px;height:15px;background:#a0a0a0"></div><div class="a" style="left:843px;top:148px;width:1px;height:15px;background:#fff"></div><div class="t" style="left:846.2px;top:149.2px;font-size:11px;letter-spacing:-0.2px">Date</div><div class="a" style="left:928px;top:148px;width:1px;height:15px;background:#a0a0a0"></div><div class="a" style="left:929px;top:148px;width:1px;height:15px;background:#fff"></div><div class="t" style="left:932.2px;top:149.2px;font-size:11px;letter-spacing:-0.2px">Attr</div><div class="a" style="left:1007px;top:147px;width:1px;height:17px;background:#a0a0a0"></div><div class="a" style="left:514px;top:164px;width:494px;height:555px;background:#fff;border-top:1px solid #404040;border-right:1px solid #f4f4f4;border-bottom:1px solid #f4f4f4;border-left:2px solid #505050"></div><div class="a" style="left:514px;top:163px;width:494px;height:1px;background:#808080"></div><svg class="a" style="left:515.5px;top:165px" width="16" height="16" viewBox="0 0 16 16"><use href="#folderh"/></svg><div class="t" style="left:533.2px;top:166.4px;font-size:12px;transform:scaleX(0.875);transform-origin:left 0;letter-spacing:0px">[.DocumentRevisions-V100]</div><div class="t" style="left:800px;top:166.4px;font-size:12px;transform:scaleX(0.82);transform-origin:left 0;letter-spacing:0px">&lt;DIR&gt;</div><div class="t" style="left:845.5px;top:166.4px;font-size:12px;transform:scaleX(0.9);transform-origin:left 0;letter-spacing:0px">11/05/2014 18:31r-h-</div><svg class="a" style="left:515.5px;top:181px" width="16" height="16" viewBox="0 0 16 16"><use href="#folderh"/></svg><div class="t" style="left:533.2px;top:182.02px;font-size:12px;transform:scaleX(0.875);transform-origin:left 0;letter-spacing:0px">[.fseventsd]</div><div class="t" style="left:800px;top:182.02px;font-size:12px;transform:scaleX(0.82);transform-origin:left 0;letter-spacing:0px">&lt;DIR&gt;</div><div class="t" style="left:845.5px;top:182.02px;font-size:12px;transform:scaleX(0.9);transform-origin:left 0;letter-spacing:0px">04/06/2014 17:05--h-</div><svg class="a" style="left:515.5px;top:197px" width="16" height="16" viewBox="0 0 16 16"><use href="#folderh"/></svg><div class="t" style="left:533.2px;top:197.64000000000001px;font-size:12px;transform:scaleX(0.875);transform-origin:left 0;letter-spacing:0px">[.MobileBackups]</div><div class="t" style="left:800px;top:197.64000000000001px;font-size:12px;transform:scaleX(0.82);transform-origin:left 0;letter-spacing:0px">&lt;DIR&gt;</div><div class="t" style="left:845.5px;top:197.64000000000001px;font-size:12px;transform:scaleX(0.9);transform-origin:left 0;letter-spacing:0px">16/12/2012 11:28--h-</div><svg class="a" style="left:515.5px;top:212px" width="16" height="16" viewBox="0 0 16 16"><use href="#folderh"/></svg><div class="t" style="left:533.2px;top:213.26000000000002px;font-size:12px;transform:scaleX(0.875);transform-origin:left 0;letter-spacing:0px">[.Spotlight-V100]</div><div class="t" style="left:800px;top:213.26000000000002px;font-size:12px;transform:scaleX(0.82);transform-origin:left 0;letter-spacing:0px">&lt;DIR&gt;</div><div class="t" style="left:845.5px;top:213.26000000000002px;font-size:12px;transform:scaleX(0.9);transform-origin:left 0;letter-spacing:0px">01/01/2001 01:55--h-</div><svg class="a" style="left:515.5px;top:228px" width="16" height="16" viewBox="0 0 16 16"><use href="#folderh"/></svg><div class="t" style="left:533.2px;top:228.88px;font-size:12px;transform:scaleX(0.875);transform-origin:left 0;letter-spacing:0px">[.Trashes]</div><div class="t" style="left:800px;top:228.88px;font-size:12px;transform:scaleX(0.82);transform-origin:left 0;letter-spacing:0px">&lt;DIR&gt;</div><div class="t" style="left:845.5px;top:228.88px;font-size:12px;transform:scaleX(0.9);transform-origin:left 0;letter-spacing:0px">04/06/2014 16:47--h-</div><svg class="a" style="left:515.5px;top:243px" width="16" height="16" viewBox="0 0 16 16"><use href="#folderh"/></svg><div class="t" style="left:533.2px;top:244.5px;font-size:12px;transform:scaleX(0.875);transform-origin:left 0;letter-spacing:0px">[.vol]</div><div class="t" style="left:800px;top:244.5px;font-size:12px;transform:scaleX(0.82);transform-origin:left 0;letter-spacing:0px">&lt;DIR&gt;</div><div class="t" style="left:845.5px;top:244.5px;font-size:12px;transform:scaleX(0.9);transform-origin:left 0;letter-spacing:0px">20/06/2012 20:13--h-</div><svg class="a" style="left:515.5px;top:259px" width="16" height="16" viewBox="0 0 16 16"><use href="#folder"/></svg><div class="t" style="left:533.2px;top:260.12px;font-size:12px;transform:scaleX(0.875);transform-origin:left 0;letter-spacing:0px">[~]</div><div class="t" style="left:800px;top:260.12px;font-size:12px;transform:scaleX(0.82);transform-origin:left 0;letter-spacing:0px">&lt;DIR&gt;</div><div class="t" style="left:845.5px;top:260.12px;font-size:12px;transform:scaleX(0.9);transform-origin:left 0;letter-spacing:0px">18/12/2011 14:20----</div><svg class="a" style="left:515.5px;top:275px" width="16" height="16" viewBox="0 0 16 16"><use href="#folder"/></svg><div class="t" style="left:533.2px;top:275.74px;font-size:12px;transform:scaleX(0.875);transform-origin:left 0;letter-spacing:0px">[Applications]</div><div class="t" style="left:800px;top:275.74px;font-size:12px;transform:scaleX(0.82);transform-origin:left 0;letter-spacing:0px">&lt;DIR&gt;</div><div class="t" style="left:845.5px;top:275.74px;font-size:12px;transform:scaleX(0.9);transform-origin:left 0;letter-spacing:0px">28/05/2014 19:10----</div><svg class="a" style="left:515.5px;top:290px" width="16" height="16" viewBox="0 0 16 16"><use href="#folder"/></svg><div class="t" style="left:533.2px;top:291.36px;font-size:12px;transform:scaleX(0.875);transform-origin:left 0;letter-spacing:0px">[bin]</div><div class="t" style="left:800px;top:291.36px;font-size:12px;transform:scaleX(0.82);transform-origin:left 0;letter-spacing:0px">&lt;DIR&gt;</div><div class="t" style="left:845.5px;top:291.36px;font-size:12px;transform:scaleX(0.9);transform-origin:left 0;letter-spacing:0px">12/06/2013 05:34----</div><svg class="a" style="left:515.5px;top:306px" width="16" height="16" viewBox="0 0 16 16"><use href="#folder"/></svg><div class="t" style="left:533.2px;top:306.98px;font-size:12px;transform:scaleX(0.875);transform-origin:left 0;letter-spacing:0px">[cores]</div><div class="t" style="left:800px;top:306.98px;font-size:12px;transform:scaleX(0.82);transform-origin:left 0;letter-spacing:0px">&lt;DIR&gt;</div><div class="t" style="left:845.5px;top:306.98px;font-size:12px;transform:scaleX(0.9);transform-origin:left 0;letter-spacing:0px">16/08/2012 22:07----</div><svg class="a" style="left:515.5px;top:322px" width="16" height="16" viewBox="0 0 16 16"><use href="#folder"/></svg><div class="t" style="left:533.2px;top:322.6px;font-size:12px;transform:scaleX(0.875);transform-origin:left 0;letter-spacing:0px">[Data]</div><div class="t" style="left:800px;top:322.6px;font-size:12px;transform:scaleX(0.82);transform-origin:left 0;letter-spacing:0px">&lt;DIR&gt;</div><div class="t" style="left:845.5px;top:322.6px;font-size:12px;transform:scaleX(0.9);transform-origin:left 0;letter-spacing:0px">20/01/2013 15:38r---</div><svg class="a" style="left:516px;top:337px" width="16" height="16" viewBox="0 0 16 16"><use href="#link"/></svg><div class="t" style="left:533.2px;top:338.22px;font-size:12px;transform:scaleX(0.875);transform-origin:left 0;letter-spacing:0px">[etc]</div><div class="t" style="left:800px;top:338.22px;font-size:12px;transform:scaleX(0.82);transform-origin:left 0;letter-spacing:0px">&lt;LNK&gt;</div><div class="t" style="left:845.5px;top:338.22px;font-size:12px;transform:scaleX(0.9);transform-origin:left 0;letter-spacing:0px">04/06/2014 05:41----</div><svg class="a" style="left:516px;top:353px" width="16" height="16" viewBox="0 0 16 16"><use href="#link"/></svg><div class="t" style="left:533.2px;top:353.84000000000003px;font-size:12px;transform:scaleX(0.875);transform-origin:left 0;letter-spacing:0px">[home]</div><div class="t" style="left:800px;top:353.84000000000003px;font-size:12px;transform:scaleX(0.82);transform-origin:left 0;letter-spacing:0px">&lt;LNK&gt;</div><div class="t" style="left:845.5px;top:353.84000000000003px;font-size:12px;transform:scaleX(0.9);transform-origin:left 0;letter-spacing:0px">04/06/2014 16:47----</div><svg class="a" style="left:515.5px;top:368px" width="16" height="16" viewBox="0 0 16 16"><use href="#folder"/></svg><div class="t" style="left:533.2px;top:369.46000000000004px;font-size:12px;transform:scaleX(0.875);transform-origin:left 0;letter-spacing:0px">[home.org]</div><div class="t" style="left:800px;top:369.46000000000004px;font-size:12px;transform:scaleX(0.82);transform-origin:left 0;letter-spacing:0px">&lt;DIR&gt;</div><div class="t" style="left:845.5px;top:369.46000000000004px;font-size:12px;transform:scaleX(0.9);transform-origin:left 0;letter-spacing:0px">16/12/2012 11:28r---</div><svg class="a" style="left:515.5px;top:384px" width="16" height="16" viewBox="0 0 16 16"><use href="#folder"/></svg><div class="t" style="left:533.2px;top:385.08000000000004px;font-size:12px;transform:scaleX(0.875);transform-origin:left 0;letter-spacing:0px">[Incompatible Software]</div><div class="t" style="left:800px;top:385.08000000000004px;font-size:12px;transform:scaleX(0.82);transform-origin:left 0;letter-spacing:0px">&lt;DIR&gt;</div><div class="t" style="left:845.5px;top:385.08000000000004px;font-size:12px;transform:scaleX(0.9);transform-origin:left 0;letter-spacing:0px">30/12/2012 18:18----</div><svg class="a" style="left:515.5px;top:400px" width="16" height="16" viewBox="0 0 16 16"><use href="#folder"/></svg><div class="t" style="left:533.2px;top:400.70000000000005px;font-size:12px;transform:scaleX(0.875);transform-origin:left 0;letter-spacing:0px">[Library]</div><div class="t" style="left:800px;top:400.70000000000005px;font-size:12px;transform:scaleX(0.82);transform-origin:left 0;letter-spacing:0px">&lt;DIR&gt;</div><div class="t" style="left:845.5px;top:400.70000000000005px;font-size:12px;transform:scaleX(0.9);transform-origin:left 0;letter-spacing:0px">22/05/2014 16:48----</div><svg class="a" style="left:515.5px;top:415px" width="16" height="16" viewBox="0 0 16 16"><use href="#folder"/></svg><div class="t" style="left:533.2px;top:416.32000000000005px;font-size:12px;transform:scaleX(0.875);transform-origin:left 0;letter-spacing:0px">[net]</div><div class="t" style="left:800px;top:416.32000000000005px;font-size:12px;transform:scaleX(0.82);transform-origin:left 0;letter-spacing:0px">&lt;DIR&gt;</div><div class="t" style="left:845.5px;top:416.32000000000005px;font-size:12px;transform:scaleX(0.9);transform-origin:left 0;letter-spacing:0px">04/06/2014 16:46r---</div><svg class="a" style="left:515.5px;top:431px" width="16" height="16" viewBox="0 0 16 16"><use href="#folder"/></svg><div class="t" style="left:533.2px;top:431.94px;font-size:12px;transform:scaleX(0.875);transform-origin:left 0;letter-spacing:0px">[Network]</div><div class="t" style="left:800px;top:431.94px;font-size:12px;transform:scaleX(0.82);transform-origin:left 0;letter-spacing:0px">&lt;DIR&gt;</div><div class="t" style="left:845.5px;top:431.94px;font-size:12px;transform:scaleX(0.9);transform-origin:left 0;letter-spacing:0px">16/08/2012 22:07----</div><svg class="a" style="left:515.5px;top:446px" width="16" height="16" viewBox="0 0 16 16"><use href="#folder"/></svg><div class="t" style="left:533.2px;top:447.56px;font-size:12px;transform:scaleX(0.875);transform-origin:left 0;letter-spacing:0px">[opt]</div><div class="t" style="left:800px;top:447.56px;font-size:12px;transform:scaleX(0.82);transform-origin:left 0;letter-spacing:0px">&lt;DIR&gt;</div><div class="t" style="left:845.5px;top:447.56px;font-size:12px;transform:scaleX(0.9);transform-origin:left 0;letter-spacing:0px">02/02/2014 14:35----</div><svg class="a" style="left:515.5px;top:462px" width="16" height="16" viewBox="0 0 16 16"><use href="#folder"/></svg><div class="t" style="left:533.2px;top:463.18px;font-size:12px;transform:scaleX(0.875);transform-origin:left 0;letter-spacing:0px">[private]</div><div class="t" style="left:800px;top:463.18px;font-size:12px;transform:scaleX(0.82);transform-origin:left 0;letter-spacing:0px">&lt;DIR&gt;</div><div class="t" style="left:845.5px;top:463.18px;font-size:12px;transform:scaleX(0.9);transform-origin:left 0;letter-spacing:0px">16/12/2012 11:25----</div><svg class="a" style="left:515.5px;top:478px" width="16" height="16" viewBox="0 0 16 16"><use href="#folder"/></svg><div class="t" style="left:533.2px;top:478.8px;font-size:12px;transform:scaleX(0.875);transform-origin:left 0;letter-spacing:0px">[sbin]</div><div class="t" style="left:800px;top:478.8px;font-size:12px;transform:scaleX(0.82);transform-origin:left 0;letter-spacing:0px">&lt;DIR&gt;</div><div class="t" style="left:845.5px;top:478.8px;font-size:12px;transform:scaleX(0.9);transform-origin:left 0;letter-spacing:0px">21/09/2013 08:17----</div><svg class="a" style="left:515.5px;top:493px" width="16" height="16" viewBox="0 0 16 16"><use href="#folder"/></svg><div class="t" style="left:533.2px;top:494.42px;font-size:12px;transform:scaleX(0.875);transform-origin:left 0;letter-spacing:0px">[System]</div><div class="t" style="left:800px;top:494.42px;font-size:12px;transform:scaleX(0.82);transform-origin:left 0;letter-spacing:0px">&lt;DIR&gt;</div><div class="t" style="left:845.5px;top:494.42px;font-size:12px;transform:scaleX(0.9);transform-origin:left 0;letter-spacing:0px">16/12/2012 11:21----</div><svg class="a" style="left:516px;top:509px" width="16" height="16" viewBox="0 0 16 16"><use href="#link"/></svg><div class="t" style="left:533.2px;top:510.03999999999996px;font-size:12px;transform:scaleX(0.875);transform-origin:left 0;letter-spacing:0px">[tmp]</div><div class="t" style="left:800px;top:510.03999999999996px;font-size:12px;transform:scaleX(0.82);transform-origin:left 0;letter-spacing:0px">&lt;LNK&gt;</div><div class="t" style="left:845.5px;top:510.03999999999996px;font-size:12px;transform:scaleX(0.9);transform-origin:left 0;letter-spacing:0px">04/03/2013 18:35----</div><svg class="a" style="left:515.5px;top:525px" width="16" height="16" viewBox="0 0 16 16"><use href="#folder"/></svg><div class="t" style="left:533.2px;top:525.66px;font-size:12px;transform:scaleX(0.875);transform-origin:left 0;letter-spacing:0px">[Users]</div><div class="t" style="left:800px;top:525.66px;font-size:12px;transform:scaleX(0.82);transform-origin:left 0;letter-spacing:0px">&lt;DIR&gt;</div><div class="t" style="left:845.5px;top:525.66px;font-size:12px;transform:scaleX(0.9);transform-origin:left 0;letter-spacing:0px">16/12/2012 11:25----</div><svg class="a" style="left:515.5px;top:540px" width="16" height="16" viewBox="0 0 16 16"><use href="#folder"/></svg><div class="t" style="left:533.2px;top:541.2800000000001px;font-size:12px;transform:scaleX(0.875);transform-origin:left 0;letter-spacing:0px">[usr]</div><div class="t" style="left:800px;top:541.2800000000001px;font-size:12px;transform:scaleX(0.82);transform-origin:left 0;letter-spacing:0px">&lt;DIR&gt;</div><div class="t" style="left:845.5px;top:541.2800000000001px;font-size:12px;transform:scaleX(0.9);transform-origin:left 0;letter-spacing:0px">02/02/2014 11:19----</div><svg class="a" style="left:516px;top:556px" width="16" height="16" viewBox="0 0 16 16"><use href="#link"/></svg><div class="t" style="left:533.2px;top:556.9px;font-size:12px;transform:scaleX(0.875);transform-origin:left 0;letter-spacing:0px">[var]</div><div class="t" style="left:800px;top:556.9px;font-size:12px;transform:scaleX(0.82);transform-origin:left 0;letter-spacing:0px">&lt;LNK&gt;</div><div class="t" style="left:845.5px;top:556.9px;font-size:12px;transform:scaleX(0.9);transform-origin:left 0;letter-spacing:0px">23/09/2013 15:16----</div><svg class="a" style="left:515.5px;top:571px" width="16" height="16" viewBox="0 0 16 16"><use href="#folder"/></svg><div class="t" style="left:533.2px;top:572.5200000000001px;font-size:12px;transform:scaleX(0.875);transform-origin:left 0;letter-spacing:0px">[Volumes]</div><div class="t" style="left:800px;top:572.5200000000001px;font-size:12px;transform:scaleX(0.82);transform-origin:left 0;letter-spacing:0px">&lt;DIR&gt;</div><div class="t" style="left:845.5px;top:572.5200000000001px;font-size:12px;transform:scaleX(0.9);transform-origin:left 0;letter-spacing:0px">04/06/2014 17:13----</div><svg class="a" style="left:516px;top:587px" width="16" height="16" viewBox="0 0 16 16"><use href="#fileh"/></svg><div class="t" style="left:533.2px;top:588.14px;font-size:12px;transform:scaleX(0.875);transform-origin:left 0;letter-spacing:0px">.dbfseventsd</div><div class="t" style="right:182.5px;top:588.14px;font-size:12px;transform:scaleX(0.9);transform-origin:right 0;letter-spacing:0px">0</div><div class="t" style="left:845.5px;top:588.14px;font-size:12px;transform:scaleX(0.9);transform-origin:left 0;letter-spacing:0px">04/06/2014 16:47-ah-</div><svg class="a" style="left:516px;top:603px" width="16" height="16" viewBox="0 0 16 16"><use href="#fileh"/></svg><div class="t" style="left:533.2px;top:603.76px;font-size:12px;transform:scaleX(0.875);transform-origin:left 0;letter-spacing:0px">.DS_Store</div><div class="t" style="right:182.5px;top:603.76px;font-size:12px;transform:scaleX(0.9);transform-origin:right 0;letter-spacing:0px">15,364</div><div class="t" style="left:845.5px;top:603.76px;font-size:12px;transform:scaleX(0.9);transform-origin:left 0;letter-spacing:0px">22/05/2014 16:48-ah-</div><svg class="a" style="left:516px;top:618px" width="16" height="16" viewBox="0 0 16 16"><use href="#fileh"/></svg><div class="t" style="left:533.2px;top:619.38px;font-size:12px;transform:scaleX(0.875);transform-origin:left 0;letter-spacing:0px">.error</div><div class="t" style="right:182.5px;top:619.38px;font-size:12px;transform:scaleX(0.9);transform-origin:right 0;letter-spacing:0px">27</div><div class="t" style="left:845.5px;top:619.38px;font-size:12px;transform:scaleX(0.9);transform-origin:left 0;letter-spacing:0px">21/07/2013 18:16-ah-</div><svg class="a" style="left:516px;top:634px" width="16" height="16" viewBox="0 0 16 16"><use href="#fileh"/></svg><div class="t" style="left:533.2px;top:635.0px;font-size:12px;transform:scaleX(0.875);transform-origin:left 0;letter-spacing:0px">.file</div><div class="t" style="right:182.5px;top:635.0px;font-size:12px;transform:scaleX(0.9);transform-origin:right 0;letter-spacing:0px">0</div><div class="t" style="left:845.5px;top:635.0px;font-size:12px;transform:scaleX(0.9);transform-origin:left 0;letter-spacing:0px">16/08/2012 22:07rah-</div><svg class="a" style="left:516px;top:650px" width="16" height="16" viewBox="0 0 16 16"><use href="#file"/></svg><div class="t" style="left:533.2px;top:650.62px;font-size:12px;transform:scaleX(0.875);transform-origin:left 0;letter-spacing:0px">mach_kernel</div><div class="t" style="right:182.5px;top:650.62px;font-size:12px;transform:scaleX(0.9);transform-origin:right 0;letter-spacing:0px">8,244,640</div><div class="t" style="left:845.5px;top:650.62px;font-size:12px;transform:scaleX(0.9);transform-origin:left 0;letter-spacing:0px">29/09/2013 20:34-a--</div><div class="t" style="left:515.5px;top:722.4px;font-size:12px;transform:scaleX(0.89);transform-origin:left 0;">0 k / 8,066 k in 0 / 5 file(s), 0 / 27 dir(s)</div><div class="a" style="left:16px;top:736px;width:992px;height:1px;background:#959595"></div><div class="a" style="left:16px;top:737px;width:992px;height:1px;background:#fff"></div><div class="t" style="right:679.5px;top:742px;font-size:12px;transform:scaleX(0.87);transform-origin:right 0;">y:\.wireshark&gt;</div><div class="a" style="left:348px;top:739px;width:658px;height:18px;background:#fff;border-top:1px solid #808080;border-left:1px solid #808080;border-bottom:1px solid #fff;box-shadow:inset 1px 1px 0 #404040"></div><div class="a" style="left:990px;top:741px;width:15px;height:14px;background:#e3e3e3;border-right:1px solid #404040;border-bottom:1px solid #404040;box-shadow:inset -1px -1px 0 #808080, inset 1px 1px 0 #fff"></div><svg class="a" style="left:993px;top:746px" width="9" height="5"><path d="M0 0H9L4.5 4.5Z" fill="#000"/></svg><div class="a" style="left:16px;top:761px;width:992px;height:1px;background:#959595"></div><div class="a" style="left:16px;top:762px;width:992px;height:1px;background:#fff"></div><div class="t" style="left:-64.0px;width:300px;text-align:center;top:767.3px;font-size:12px;transform:scaleX(0.875);transform-origin:center 0;">F3 View</div><div class="t" style="left:76.25px;width:300px;text-align:center;top:767.3px;font-size:12px;transform:scaleX(0.875);transform-origin:center 0;">F4 Edit</div><div class="t" style="left:216.75px;width:300px;text-align:center;top:767.3px;font-size:12px;transform:scaleX(0.875);transform-origin:center 0;">F5 Copy</div><div class="t" style="left:357.25px;width:300px;text-align:center;top:767.3px;font-size:12px;transform:scaleX(0.875);transform-origin:center 0;">F6 Move</div><div class="t" style="left:498.0px;width:300px;text-align:center;top:767.3px;font-size:12px;transform:scaleX(0.875);transform-origin:center 0;">F7 NewFolder</div><div class="t" style="left:639.0px;width:300px;text-align:center;top:767.3px;font-size:12px;transform:scaleX(0.875);transform-origin:center 0;">F8 Delete</div><div class="t" style="left:784px;width:300px;text-align:center;top:767.3px;font-size:12px;transform:scaleX(0.875);transform-origin:center 0;">Alt+F4 Exit</div><div class="a" style="left:156px;top:766px;width:1px;height:17px;background:#909090"></div><div class="a" style="left:157px;top:766px;width:1px;height:17px;background:#fff"></div><div class="a" style="left:296px;top:766px;width:1px;height:17px;background:#909090"></div><div class="a" style="left:297px;top:766px;width:1px;height:17px;background:#fff"></div><div class="a" style="left:437px;top:766px;width:1px;height:17px;background:#909090"></div><div class="a" style="left:438px;top:766px;width:1px;height:17px;background:#fff"></div><div class="a" style="left:577px;top:766px;width:1px;height:17px;background:#909090"></div><div class="a" style="left:578px;top:766px;width:1px;height:17px;background:#fff"></div><div class="a" style="left:718px;top:766px;width:1px;height:17px;background:#909090"></div><div class="a" style="left:719px;top:766px;width:1px;height:17px;background:#fff"></div><div class="a" style="left:859px;top:766px;width:1px;height:17px;background:#909090"></div><div class="a" style="left:860px;top:766px;width:1px;height:17px;background:#fff"></div><div class="a" style="left:995px;top:771px;width:13px;height:13px;background:#fff"></div><svg class="a" style="left:995px;top:771px" width="13" height="13"><path d="M2 13L13 2M6 13L13 6M10 13L13 10" stroke="#909090" stroke-width="1"/></svg></div></body></html>
